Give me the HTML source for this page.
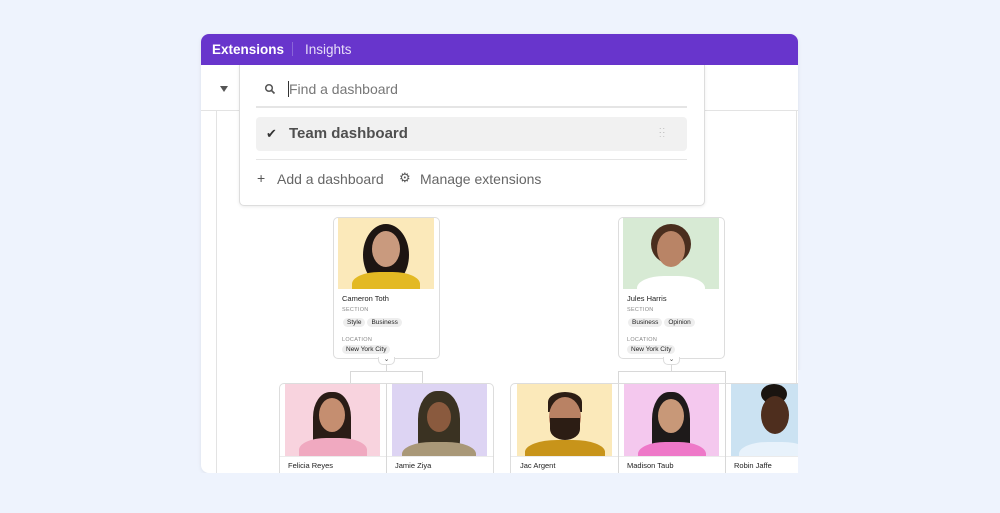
<!DOCTYPE html><html><head><style>
*{box-sizing:border-box;margin:0;padding:0}
body{width:1000px;height:507px;background:#eef3fd;font-family:"Liberation Sans",sans-serif;position:relative;overflow:hidden}
.abs{position:absolute}
.win{left:201px;top:34px;width:597px;height:439px;background:#fff;border-radius:8px;overflow:hidden;box-shadow:0 1px 4px rgba(0,0,0,.08)}
.hdr{left:0;top:0;width:597px;height:31px;background:#6835cc;color:#fff;font-size:13.5px}
.card{border:1px solid #ddd;border-radius:5px;background:#fff}
.ph{overflow:hidden}
.nm{font-size:7.5px;color:#222;line-height:9px}
.lb{font-size:5.5px;color:#888;letter-spacing:.3px;line-height:7px}
.tr{font-size:0;line-height:0;white-space:nowrap}
.tag{display:inline-block;background:#eee;border-radius:6px;font-size:6.5px;line-height:9px;padding:0 4px;color:#222;margin-right:2px}
.ln{background:#d8d8d8}
</style></head><body>
<div class="abs win">
 <div class="abs hdr"><span class="abs" style="left:11px;top:8px;font-weight:bold">Extensions</span><span class="abs" style="left:91px;top:8px;width:1px;height:14px;background:#8a66d8"></span><span class="abs" style="left:104px;top:8px;color:#e6ddf8">Insights</span></div>
 <div class="abs" style="left:0;top:76px;width:597px;height:1px;background:#e3e3e3"></div>
 <div class="abs" style="left:15px;top:77px;width:1px;height:362px;background:#e3e3e3"></div>
 <div class="abs" style="left:595px;top:77px;width:1px;height:362px;background:#e3e3e3"></div>
 <div class="abs" style="left:19px;top:52px;width:0;height:0;border-left:4px solid transparent;border-right:4px solid transparent;border-top:6px solid #555"></div>
</div>
<!-- dropdown -->
<div class="abs" style="left:239px;top:65px;width:466px;height:141px;background:#fff;border:1px solid #ddd;border-top:none;border-radius:0 0 5px 5px;box-shadow:0 1px 3px rgba(0,0,0,.08)"></div>
<svg class="abs" style="left:264px;top:83px" width="12" height="12" viewBox="0 0 12 12"><circle cx="5" cy="5" r="3.3" fill="none" stroke="#555" stroke-width="1.5"/><path d="M7.5 7.5L10.5 10.5" stroke="#555" stroke-width="1.7"/></svg>
<div class="abs" style="left:288px;top:81px;width:1px;height:16px;background:#333"></div>
<div class="abs" style="left:289px;top:81px;font-size:14px;color:#777">Find a dashboard</div>
<div class="abs" style="left:256px;top:106px;width:431px;height:2px;background:#e5e5e5"></div>
<div class="abs" style="left:256px;top:117px;width:431px;height:34px;background:#f1f1f1;border-radius:4px"></div>
<div class="abs" style="left:266px;top:126px;font-size:13px;color:#333">✔</div>
<div class="abs" style="left:289px;top:125px;font-size:15px;color:#333;font-weight:bold;opacity:.85">Team dashboard</div>
<div class="abs" style="left:659px;top:128px;font-size:9px;color:#bbb;line-height:4px;letter-spacing:1px">::<br>::</div>
<div class="abs" style="left:256px;top:159px;width:431px;height:1px;background:#e5e5e5"></div>
<div class="abs" style="left:257px;top:170px;font-size:14px;color:#555">+</div>
<div class="abs" style="left:277px;top:171px;font-size:14px;color:#666">Add a dashboard</div>
<div class="abs" style="left:399px;top:170px;font-size:13px;color:#555">⚙</div>
<div class="abs" style="left:420px;top:171px;font-size:14px;color:#666">Manage extensions</div>

<!-- top cards -->
<div class="abs card" style="left:333px;top:217px;width:107px;height:142px"></div>
<div class="abs ph" style="left:338px;top:218px;width:96px;height:71px;background:#fbe9ba">
 <div class="abs" style="left:25px;top:6px;width:46px;height:62px;border-radius:50%;background:#1d1512"></div>
 <div class="abs" style="left:34px;top:13px;width:28px;height:36px;border-radius:50%;background:#c99a7e"></div>
 <div class="abs" style="left:14px;top:54px;width:68px;height:30px;border-radius:40% 40% 0 0;background:#e3b923"></div>
</div>
<div class="abs nm" style="left:342px;top:294px">Cameron Toth</div>
<div class="abs lb" style="left:342px;top:307px">SECTION</div>
<div class="abs tr" style="left:343px;top:318px"><span class="tag">Style</span><span class="tag">Business</span></div>
<div class="abs lb" style="left:342px;top:337px">LOCATION</div>
<div class="abs tr" style="left:342px;top:345px"><span class="tag">New York City</span></div>
<div class="abs" style="left:378px;top:357px;width:17px;height:8px;background:#fff;border:1px solid #ddd;border-top:none;border-radius:0 0 5px 5px;font-size:7px;line-height:5px;text-align:center;color:#555">⌄</div>

<div class="abs card" style="left:618px;top:217px;width:107px;height:142px"></div>
<div class="abs ph" style="left:623px;top:218px;width:96px;height:71px;background:#d7ead4">
 <div class="abs" style="left:28px;top:6px;width:40px;height:40px;border-radius:50%;background:#4a2e1e"></div>
 <div class="abs" style="left:34px;top:13px;width:28px;height:36px;border-radius:50%;background:#b98466"></div>
 <div class="abs" style="left:14px;top:58px;width:68px;height:30px;border-radius:40% 40% 0 0;background:#fff"></div>
</div>
<div class="abs nm" style="left:627px;top:294px">Jules Harris</div>
<div class="abs lb" style="left:627px;top:307px">SECTION</div>
<div class="abs tr" style="left:628px;top:318px"><span class="tag">Business</span><span class="tag">Opinion</span></div>
<div class="abs lb" style="left:627px;top:337px">LOCATION</div>
<div class="abs tr" style="left:627px;top:345px"><span class="tag">New York City</span></div>
<div class="abs" style="left:663px;top:357px;width:17px;height:8px;background:#fff;border:1px solid #ddd;border-top:none;border-radius:0 0 5px 5px;font-size:7px;line-height:5px;text-align:center;color:#555">⌄</div>

<!-- connectors -->
<div class="abs ln" style="left:386px;top:365px;width:1px;height:6px"></div>
<div class="abs ln" style="left:350px;top:371px;width:73px;height:1px"></div>
<div class="abs ln" style="left:350px;top:371px;width:1px;height:12px"></div>
<div class="abs ln" style="left:422px;top:371px;width:1px;height:12px"></div>
<div class="abs ln" style="left:671px;top:365px;width:1px;height:6px"></div>
<div class="abs ln" style="left:618px;top:371px;width:108px;height:1px"></div>
<div class="abs ln" style="left:618px;top:371px;width:1px;height:12px"></div>
<div class="abs ln" style="left:725px;top:371px;width:1px;height:12px"></div>

<!-- bottom cards -->
<div class="abs card" style="left:279px;top:383px;width:215px;height:100px"></div>
<div class="abs ln" style="left:386px;top:384px;width:1px;height:90px"></div>
<div class="abs card" style="left:510px;top:383px;width:300px;height:100px"></div>
<div class="abs ln" style="left:618px;top:384px;width:1px;height:90px"></div>
<div class="abs ln" style="left:725px;top:384px;width:1px;height:90px"></div>

<div class="abs ph" style="left:285px;top:384px;width:95px;height:72px;background:#f8d3de">
 <div class="abs" style="left:28px;top:8px;width:38px;height:56px;border-radius:45% 45% 10% 10%;background:#2a1c16"></div>
 <div class="abs" style="left:34px;top:14px;width:26px;height:34px;border-radius:50%;background:#c58e70"></div>
 <div class="abs" style="left:14px;top:54px;width:68px;height:30px;border-radius:40% 40% 0 0;background:#f0a9c0"></div>
</div>
<div class="abs ph" style="left:392px;top:384px;width:95px;height:72px;background:#ddd4f3">
 <div class="abs" style="left:26px;top:7px;width:42px;height:62px;border-radius:45% 45% 20% 20%;background:#3a3222"></div>
 <div class="abs" style="left:35px;top:18px;width:24px;height:30px;border-radius:50%;background:#8a5a3e"></div>
 <div class="abs" style="left:10px;top:58px;width:74px;height:30px;border-radius:40% 40% 0 0;background:#a99878"></div>
</div>
<div class="abs ph" style="left:517px;top:384px;width:95px;height:72px;background:#fbe9ba">
 <div class="abs" style="left:31px;top:8px;width:34px;height:20px;border-radius:50% 50% 0 0;background:#2c1d14"></div>
 <div class="abs" style="left:32px;top:13px;width:32px;height:40px;border-radius:50%;background:#b98264"></div>
 <div class="abs" style="left:33px;top:34px;width:30px;height:22px;border-radius:0 0 50% 50%;background:#2c1d14"></div>
 <div class="abs" style="left:8px;top:56px;width:80px;height:30px;border-radius:40% 40% 0 0;background:#c8941a"></div>
</div>
<div class="abs ph" style="left:624px;top:384px;width:95px;height:72px;background:#f4c8ee">
 <div class="abs" style="left:28px;top:8px;width:38px;height:60px;border-radius:45% 45% 10% 10%;background:#1e1a1a"></div>
 <div class="abs" style="left:34px;top:15px;width:26px;height:34px;border-radius:50%;background:#c89878"></div>
 <div class="abs" style="left:14px;top:58px;width:68px;height:30px;border-radius:40% 40% 0 0;background:#ee78c8"></div>
</div>
<div class="abs ph" style="left:731px;top:384px;width:67px;height:72px;background:#cbe2f2">
 <div class="abs" style="left:30px;top:0;width:26px;height:20px;border-radius:50%;background:#1a1410"></div>
 <div class="abs" style="left:30px;top:12px;width:28px;height:38px;border-radius:50%;background:#4e2e1e"></div>
 <div class="abs" style="left:8px;top:58px;width:72px;height:30px;border-radius:40% 40% 0 0;background:#e8f2fb"></div>
</div>
<div class="abs ln" style="left:279px;top:456px;width:215px;height:1px;opacity:.5"></div>
<div class="abs ln" style="left:510px;top:456px;width:288px;height:1px;opacity:.5"></div>
<div class="abs nm" style="left:288px;top:461px">Felicia Reyes</div>
<div class="abs nm" style="left:395px;top:461px">Jamie Ziya</div>
<div class="abs nm" style="left:520px;top:461px">Jac Argent</div>
<div class="abs nm" style="left:627px;top:461px">Madison Taub</div>
<div class="abs nm" style="left:734px;top:461px">Robin Jaffe</div>
<div class="abs" style="left:190px;top:473px;width:640px;height:40px;background:#eef3fd"></div>
<div class="abs" style="left:798px;top:370px;width:30px;height:140px;background:#eef3fd"></div>
</body></html>
